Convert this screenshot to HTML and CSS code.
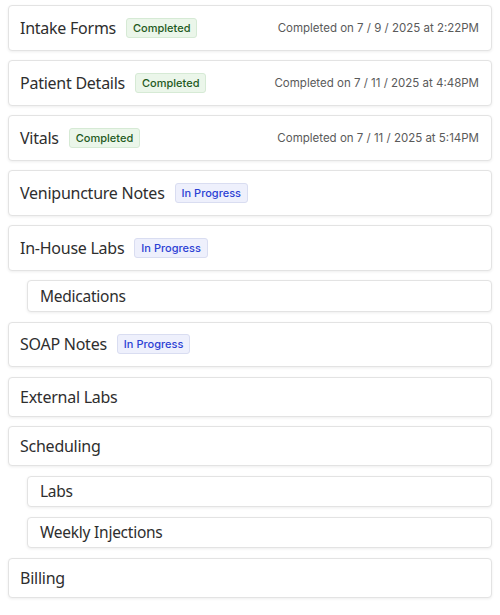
FILE: index.html
```html
<!DOCTYPE html>
<html>
<head>
<meta charset="utf-8">
<link rel="stylesheet" href="styles.css">
</head>
<body>
<div class="list">
  <div class="card tall">
    <div class="row">
      <span class="title">Intake Forms</span>
      <span class="badge done">Completed</span>
      <span class="date">Completed on 7 / 9 / 2025 at 2:22PM</span>
    </div>
  </div>
  <div class="card tall">
    <div class="row">
      <span class="title">Patient Details</span>
      <span class="badge done">Completed</span>
      <span class="date">Completed on 7 / 11 / 2025 at 4:48PM</span>
    </div>
  </div>
  <div class="card tall">
    <div class="row">
      <span class="title">Vitals</span>
      <span class="badge done">Completed</span>
      <span class="date">Completed on 7 / 11 / 2025 at 5:14PM</span>
    </div>
  </div>
  <div class="card tall">
    <div class="row">
      <span class="title">Venipuncture Notes</span>
      <span class="badge prog">In Progress</span>
    </div>
  </div>
  <div class="card tall">
    <div class="row">
      <span class="title">In-House Labs</span>
      <span class="badge prog">In Progress</span>
    </div>
  </div>
  <div class="card sub">
    <div class="row"><span class="title">Medications</span></div>
  </div>
  <div class="card tall">
    <div class="row">
      <span class="title">SOAP Notes</span>
      <span class="badge prog">In Progress</span>
    </div>
  </div>
  <div class="card">
    <div class="row"><span class="title">External Labs</span></div>
  </div>
  <div class="card">
    <div class="row"><span class="title">Scheduling</span></div>
  </div>
  <div class="card sub">
    <div class="row"><span class="title">Labs</span></div>
  </div>
  <div class="card sub">
    <div class="row"><span class="title">Weekly Injections</span></div>
  </div>
  <div class="card">
    <div class="row"><span class="title">Billing</span></div>
  </div>
</div>
</body>
</html>
```
FILE: styles.css
```css
html, body {
  margin: 0;
  padding: 0;
  background: #ffffff;
}
body {
  padding: 5px 8px;
  font-family: "Noto Sans", "Open Sans", sans-serif;
}
.list {
  display: flex;
  flex-direction: column;
  gap: 9.6px;
}
.card {
  box-sizing: border-box;
  height: 40px;
  border: 1px solid #e3e3e3;
  border-radius: 4px;
  background: #fff;
  box-shadow: 0 1px 3px rgba(0, 0, 0, 0.07);
  padding: 0 12px 0 11px;
  display: flex;
  flex-direction: column;
  justify-content: center;
}
.card.tall {
  height: 45.5px;
}
.card.sub {
  height: 31.5px;
  margin-left: 19px;
  padding: 0 12px;
}
.row {
  display: flex;
  align-items: center;
}
.title {
  font-size: 16px;
  letter-spacing: -0.25px;
  line-height: 22px;
  color: #2e2e2e;
}
.sub .title {
  font-size: 15.5px;
  line-height: 21px;
}
.badge {
  margin-left: 10px;
  height: 20px;
  box-sizing: border-box;
  padding: 0 6px;
  border-radius: 3px;
  font-family: "Inter", sans-serif;
  font-size: 11px;
  font-weight: 500;
  line-height: 18px;
}
.badge.done {
  background: #ebf6ea;
  border: 1px solid #d6ead5;
  color: #1f5a22;
}
.badge.prog {
  background: #eef0fc;
  border: 1px solid #d9ddf1;
  color: #2c41d4;
}
.date {
  margin-left: auto;
  font-family: "Inter", sans-serif;
  font-size: 11.5px;
  color: #5a5a5a;
}
```
